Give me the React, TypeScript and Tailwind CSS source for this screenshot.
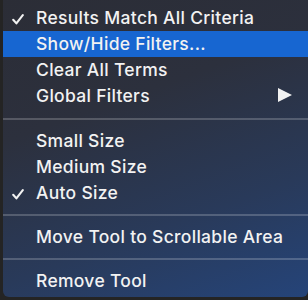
import React from "react";

type Item = { label: string; checked?: boolean; active?: boolean; submenu?: boolean };

const groups: Item[][] = [
  [
    { label: "Results Match All Criteria", checked: true },
    { label: "Show/Hide Filters...", active: true },
    { label: "Clear All Terms" },
    { label: "Global Filters", submenu: true },
  ],
  [{ label: "Small Size" }, { label: "Medium Size" }, { label: "Auto Size", checked: true }],
  [{ label: "Move Tool to Scrollable Area" }],
  [{ label: "Remove Tool" }],
];

function Check() {
  return (
    <svg width="12" height="11" viewBox="0 0 12 11" fill="none">
      <path d="M1.2 5.8 L4.4 9.4 L10.8 1.2" stroke="#f2f2f2" strokeWidth="2.1" strokeLinecap="round" strokeLinejoin="round" />
    </svg>
  );
}

function Row({ item }: { item: Item }) {
  return (
    <div
      className={`relative flex h-[26px] items-center pl-[33px] pr-4 ${
        item.active ? "bg-[#1766d1]" : ""
      }`}
    >
      {item.checked && (
        <span className="absolute left-[9px] top-[9px]">
          <Check />
        </span>
      )}
      <span className="tracking-[0.3px]">{item.label}</span>
      {item.submenu && (
        <svg className="absolute left-[275px] top-[5px]" width="14" height="14" viewBox="0 0 14 14">
          <polygon points="0,0 14,7 0,14" fill="#f2f2f2" />
        </svg>
      )}
    </div>
  );
}

export default function App() {
  return (
    <div className="h-[300px] w-[308px] overflow-hidden bg-[#242424]">
      <div
        className="ml-[3px] w-[305px] rounded-b-[6px] bg-[linear-gradient(160deg,#2b2d36_0%,#2c303d_35%,#293a5a_70%,#254479_100%)] pb-[3px] pt-[5px] text-[17.5px] font-medium text-[#f2f2f2]"
        style={{ fontFamily: "Inter, 'Liberation Sans', sans-serif" }}
      >
        {groups.map((g, gi) => (
          <div key={gi}>
            {gi > 0 && (
              <div className={`flex items-center ${gi === 1 ? "h-[19px]" : "h-[18px]"}`}>
                <div className="h-[2px] w-full bg-white/20" />
              </div>
            )}
            {g.map((item) => (
              <Row key={item.label} item={item} />
            ))}
          </div>
        ))}
      </div>
    </div>
  );
}
